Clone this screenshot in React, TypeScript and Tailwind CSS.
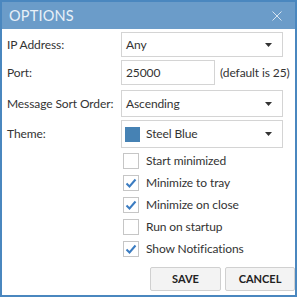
import { useState } from "react";

const FONT = { fontFamily: 'Lato, "Noto Sans", sans-serif' };

function Arrow() {
  return (
    <svg width="7" height="4" viewBox="0 0 7 4" className="shrink-0">
      <path d="M0 0 H7 L3.5 4 Z" fill="#333" />
    </svg>
  );
}

function Check({ checked, label }: { checked: boolean; label: string }) {
  return (
    <div className="flex items-center h-[22px]">
      <div className="w-[16px] h-[16px] border border-[#c6c6c6] bg-white flex items-center justify-center">
        {checked && (
          <svg width="14" height="14" viewBox="0 0 14 14">
            <path d="M2.5 7.5 L5.5 10.5 L11.5 3.5" fill="none" stroke="#3b7cc1" strokeWidth="2" />
          </svg>
        )}
      </div>
      <span className="ml-[7px] whitespace-nowrap">{label}</span>
    </div>
  );
}

export default function App() {
  const [opts] = useState([
    { label: "Start minimized", checked: false },
    { label: "Minimize to tray", checked: true },
    { label: "Minimize on close", checked: true },
    { label: "Run on startup", checked: false },
    { label: "Show Notifications", checked: true },
  ]);

  return (
    <div className="w-[297px] h-[297px] border-2 border-[#4a87bf] bg-white flex flex-col" style={FONT}>
      <header className="h-[27px] bg-[#6b9cc9] flex items-center justify-between pl-[7px] pr-[13px]">
        <h1 className="text-[14.5px] text-[#e8f0f8] tracking-[0.2px]">OPTIONS</h1>
        <svg width="10" height="10" viewBox="0 0 10 10">
          <path d="M0.5 0.5 L9.5 9.5 M9.5 0.5 L0.5 9.5" stroke="#d6e4f1" strokeWidth="1" />
        </svg>
      </header>

      <div className="flex flex-col pt-[3px] text-[12px] tracking-[-0.1px] text-[#333] whitespace-nowrap">
        <div className="flex items-center h-[25px]">
          <label className="w-[119px] pl-[5px]">IP Address:</label>
          <div className="w-[162px] h-full border border-[#d4d4d4] flex items-center justify-between pl-[4px] pr-[10px]">
            <span>Any</span>
            <Arrow />
          </div>
        </div>

        <div className="flex items-center h-[25px] mt-[3px]">
          <label className="w-[119px] pl-[5px]">Port:</label>
          <div className="w-[94px] h-full border border-[#d4d4d4] flex items-center pl-[4px]">25000</div>
          <span className="ml-[5px]">(default is 25)</span>
        </div>

        <div className="flex items-center h-[27px] mt-[5px]">
          <label className="w-[119px] pl-[5px]">Message Sort Order:</label>
          <div className="w-[162px] h-full border border-[#d4d4d4] flex items-center justify-between pl-[4px] pr-[10px]">
            <span>Ascending</span>
            <Arrow />
          </div>
        </div>

        <div className="flex items-center h-[28px] mt-[3px]">
          <label className="w-[119px] pl-[5px]">Theme:</label>
          <div className="w-[162px] h-full border border-[#d4d4d4] flex items-center justify-between pl-[3px] pr-[10px]">
            <div className="flex items-center gap-[6px]">
              <span className="w-[15px] h-[15px] bg-[#4682b4]" />
              <span>Steel Blue</span>
            </div>
            <Arrow />
          </div>
        </div>

        <div className="flex flex-col pl-[121px] mt-[2px]">
          {opts.map((o) => (
            <Check key={o.label} checked={o.checked} label={o.label} />
          ))}
        </div>

        <div className="flex justify-end gap-[4px] mt-[7px]">
          <button className="w-[71px] h-[24px] rounded-[2px] border border-[#d0d0d0] bg-[#f3f3f3] text-[11px] font-bold tracking-normal text-[#222]">
            SAVE
          </button>
          <button className="w-[70px] h-[24px] rounded-[2px] border border-[#d0d0d0] bg-[#f3f3f3] text-[11px] font-bold tracking-normal text-[#222]">
            CANCEL
          </button>
        </div>
      </div>
    </div>
  );
}
